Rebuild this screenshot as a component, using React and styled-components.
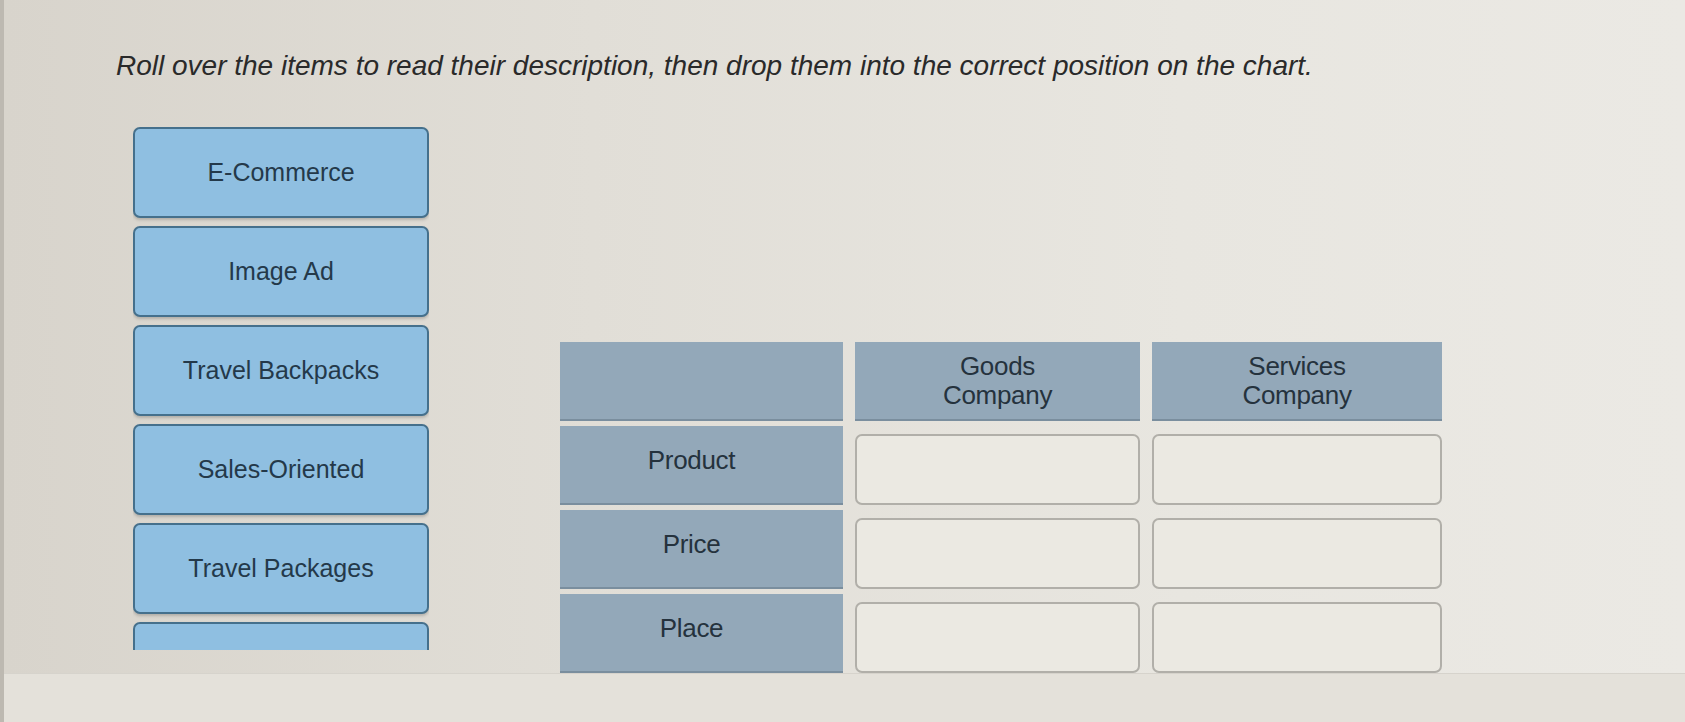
import React from "react";
import styled, { createGlobalStyle } from "styled-components";

const GlobalStyle = createGlobalStyle`
  html, body {
    margin: 0;
    padding: 0;
  }
  body {
    width: 1685px;
    height: 722px;
    overflow: hidden;
    font-family: "Liberation Sans", Arial, sans-serif;
  }
`;

const cards = [
  "E-Commerce",
  "Image Ad",
  "Travel Backpacks",
  "Sales-Oriented",
  "Travel Packages",
  "",
];

const rows = ["Product", "Price", "Place"];

const App = () => {
  return (
    <>
      <GlobalStyle />
      <Page>
        <Instructions>
          Roll over the items to read their description, then drop them into
          the correct position on the chart.
        </Instructions>
        <Workspace>
          <CardList>
            {cards.map((label, i) => (
              <DragCard key={i}>{label}</DragCard>
            ))}
          </CardList>
          <Chart>
            <HeadCell />
            <HeadCell>
              Goods
              <br />
              Company
            </HeadCell>
            <HeadCell>
              Services
              <br />
              Company
            </HeadCell>
            {rows.map((r) => (
              <React.Fragment key={r}>
                <HeadCell $row>{r}</HeadCell>
                <DropCell />
                <DropCell />
              </React.Fragment>
            ))}
          </Chart>
        </Workspace>
        <Footer />
      </Page>
    </>
  );
};

const Page = styled.div`
  width: 1685px;
  height: 722px;
  box-sizing: border-box;
  display: flex;
  flex-direction: column;
  background: linear-gradient(90deg, #d8d4cc 0%, #e1ded7 35%, #e8e6e0 70%, #ebe9e4 100%);
  border-left: 4px solid #bdb9b1;
`;

const Instructions = styled.p`
  margin: 0;
  padding: 50px 0 0 112px;
  font-size: 28px;
  font-style: italic;
  color: #2a2a2a;
  line-height: 32px;
`;

const Workspace = styled.div`
  display: flex;
  align-items: flex-start;
  padding: 45px 0 0 129px;
  gap: 131px;
`;

const CardList = styled.div`
  width: 296px;
  height: 523px;
  overflow: hidden;
  display: flex;
  flex-direction: column;
  gap: 8px;
`;

const DragCard = styled.div`
  flex: 0 0 91px;
  box-sizing: border-box;
  display: flex;
  align-items: center;
  justify-content: center;
  background: #8fbfe1;
  border: 2px solid #45708c;
  border-radius: 7px;
  box-shadow: 0 2px 3px rgba(60, 60, 60, 0.25);
  font-size: 25px;
  color: #24394a;
`;

const Chart = styled.div`
  margin-top: 215px;
  display: grid;
  grid-template-columns: 283px 285px 290px;
  grid-template-rows: repeat(4, 79px);
  column-gap: 12px;
  row-gap: 5px;
`;

const HeadCell = styled.div`
  display: flex;
  align-items: center;
  justify-content: center;
  text-align: center;
  background: #93a8b9;
  border-bottom: 2px solid #7a8e9e;
  font-size: 26px;
  line-height: 29px;
  letter-spacing: -0.3px;
  color: #25323d;
  padding-right: ${(p) => (p.$row ? "20px" : "0")};
  padding-bottom: ${(p) => (p.$row ? "8px" : "0")};
`;

const DropCell = styled.div`
  box-sizing: border-box;
  background: #ebe9e2;
  border: 2px solid #b1afa9;
  border-radius: 7px;
  margin-top: 8px;
`;

const Footer = styled.div`
  margin-top: auto;
  height: 50px;
  border-top: 1px solid #d6d3cc;
  background: #e4e1da;
`;

export default App;
